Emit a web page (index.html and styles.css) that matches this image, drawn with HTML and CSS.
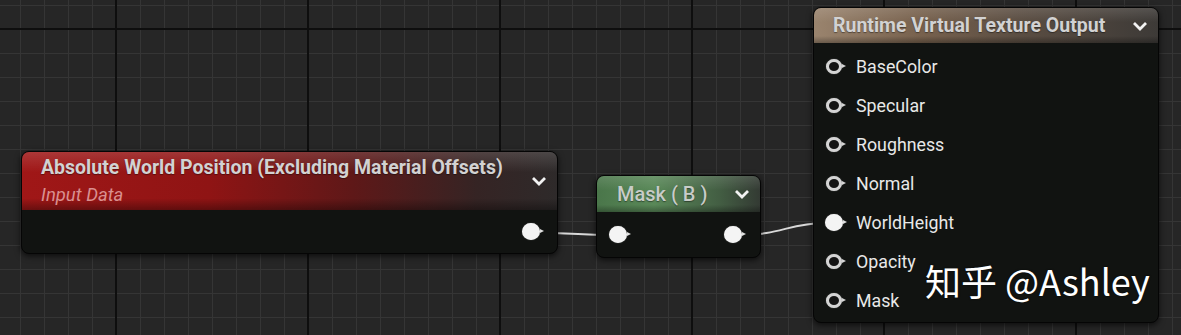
FILE: index.html
```html
<!DOCTYPE html>
<html lang="en">
<head>
    <meta charset="UTF-8">
    <title>Material Graph</title>
    <link rel="stylesheet" href="styles.css">
</head>
<body>
    <div class="graph">
        <svg class="wires" width="1181" height="335">
            <path d="M540 233 C 575 233, 580 235, 610 235" />
            <path d="M742 235 C 780 235, 790 223, 826 223" />
        </svg>

        <div class="node node-world">
            <div class="node-head head-red">
                <div class="head-text">
                    <div class="title">Absolute World Position (Excluding Material Offsets)</div>
                    <div class="subtitle">Input Data</div>
                </div>
                <svg class="chevron" width="16" height="12" viewBox="0 0 16 12"><polyline points="2,3 8,9 14,3" /></svg>
            </div>
            <div class="node-body body-out">
                <span class="pin filled"></span>
            </div>
        </div>

        <div class="node node-mask">
            <div class="node-head head-green">
                <div class="title title-mask">Mask ( B )</div>
                <svg class="chevron" width="16" height="12" viewBox="0 0 16 12"><polyline points="2,3 8,9 14,3" /></svg>
            </div>
            <div class="node-body body-io">
                <span class="pin filled"></span>
                <span class="pin filled"></span>
            </div>
        </div>

        <div class="node node-rvt">
            <div class="node-head head-brown">
                <div class="title">Runtime Virtual Texture Output</div>
                <svg class="chevron" width="16" height="12" viewBox="0 0 16 12"><polyline points="2,3 8,9 14,3" /></svg>
            </div>
            <div class="node-body body-list">
                <div class="row"><span class="pin"></span>BaseColor</div>
                <div class="row"><span class="pin"></span>Specular</div>
                <div class="row"><span class="pin"></span>Roughness</div>
                <div class="row"><span class="pin"></span>Normal</div>
                <div class="row"><span class="pin filled"></span>WorldHeight</div>
                <div class="row"><span class="pin"></span>Opacity</div>
                <div class="row"><span class="pin"></span>Mask</div>
            </div>
        </div>

        <div class="watermark">知乎 @Ashley</div>
    </div>
</body>
</html>
```

FILE: styles.css
```css
body {
    margin: 0;
    font-family: Roboto, "Liberation Sans", sans-serif;
}
.graph {
    position: relative;
    width: 1181px;
    height: 335px;
    overflow: hidden;
    background-color: #262626;
    background-image:
        linear-gradient(90deg, #0e0e0e 2px, transparent 2px),
        linear-gradient(#0e0e0e 2px, transparent 2px),
        linear-gradient(90deg, #353535 1px, transparent 1px),
        linear-gradient(#353535 1px, transparent 1px);
    background-size: 192px 100%, 100% 400px, 24px 24px, 24px 24px;
    background-position: 115px 0, 0 28px, 20px 0, 0 5px;
}
.wires {
    position: absolute;
    left: 0;
    top: 0;
}
.wires path {
    fill: none;
    stroke: #d8d8d8;
    stroke-width: 2;
}
.node {
    position: absolute;
    display: flex;
    flex-direction: column;
    border-radius: 8px;
    overflow: hidden;
    background: #111311;
    border: 1px solid #050505;
    box-shadow: 0 2px 6px rgba(0, 0, 0, 0.7);
}
.node-world { left: 21px; top: 151px; width: 535px; height: 101px; }
.node-mask { left: 596px; top: 175px; width: 163px; height: 81px; }
.node-rvt { left: 813px; top: 7px; width: 344px; height: 314px; }

.node-head {
    display: flex;
    align-items: center;
    justify-content: space-between;
    box-sizing: border-box;
    padding: 0 10px 0 19px;
}
.head-red {
    height: 58px;
    background:
        linear-gradient(rgba(255, 255, 255, 0.14), rgba(255, 255, 255, 0) 35%, rgba(0, 0, 0, 0) 80%, rgba(0, 0, 0, 0.35)),
        linear-gradient(90deg, #a01717 0%, #8f1414 35%, #5e1818 62%, #352424 85%, #2e2a2a 100%);
}
.head-green {
    height: 36px;
    padding-left: 20px;
    background:
        linear-gradient(rgba(255, 255, 255, 0.12), rgba(255, 255, 255, 0) 40%, rgba(0, 0, 0, 0) 80%, rgba(0, 0, 0, 0.3)),
        linear-gradient(90deg, #4a764a 0%, #598858 35%, #435e43 75%, #333a33 100%);
}
.head-brown {
    height: 35px;
    background:
        linear-gradient(rgba(255, 255, 255, 0.12), rgba(255, 255, 255, 0) 40%, rgba(0, 0, 0, 0) 80%, rgba(0, 0, 0, 0.3)),
        linear-gradient(90deg, #9a846e 0%, #78624e 30%, #5a4d42 60%, #3d3a37 100%);
}
.head-text {
    display: flex;
    flex-direction: column;
}
.title {
    color: #d2d2d2;
    font-size: 19.5px;
    font-weight: bold;
    line-height: 24px;
    white-space: nowrap;
    text-shadow: 0 1px 1px rgba(0, 0, 0, 0.4);
}
.subtitle {
    color: #d99090;
    font-size: 18.5px;
    font-style: italic;
    line-height: 22px;
    margin-top: 4px;
}
.title-mask {
    font-size: 20px;
    font-weight: 500;
    color: #c8ccc8;
}
.chevron {
    flex: none;
}
.chevron polyline {
    fill: none;
    stroke: #f2f2f2;
    stroke-width: 2.8;
}

.node-body {
    flex: 1;
    display: flex;
    align-items: center;
}
.body-out {
    justify-content: flex-end;
    padding: 0 10px 0 0;
}
.body-io {
    justify-content: space-between;
    padding: 0 11px 0 12px;
}
.body-list {
    flex-direction: column;
    align-items: stretch;
    padding-top: 4px;
}
.row {
    display: flex;
    align-items: center;
    height: 39px;
    padding-left: 12px;
    color: #e8e8e8;
    font-size: 17.8px;
}
.row .pin {
    margin-right: 14px;
}
.row .pin.filled {
    margin-left: -1px;
    margin-right: 13px;
}

.pin {
    position: relative;
    width: 16px;
    height: 15px;
    box-sizing: border-box;
    border-radius: 50%;
    border: 3.5px solid #d4d4d4;
    background: #141414;
    flex: none;
    margin-right: 7px;
    box-shadow: 0 0 1px rgba(255, 255, 255, 0.5);
}
.pin::after {
    content: "";
    position: absolute;
    right: -7px;
    top: 1.5px;
    border-left: 4px solid #d4d4d4;
    border-top: 2.5px solid transparent;
    border-bottom: 2.5px solid transparent;
}
.pin.filled {
    background: #f4f4f4;
    border-color: #f4f4f4;
    width: 18px;
    height: 17px;
}
.pin.filled::after {
    top: 2.5px;
    right: -7px;
    border-left-color: #e0e0e0;
}

.watermark {
    position: absolute;
    left: 925px;
    top: 258px;
    color: #ffffff;
    font-family: "Noto Sans CJK SC", "Noto Sans", sans-serif;
    font-size: 36px;
    line-height: 44px;
    white-space: nowrap;
    text-shadow: 0 0 2px rgba(0, 0, 0, 0.6);
}
```
